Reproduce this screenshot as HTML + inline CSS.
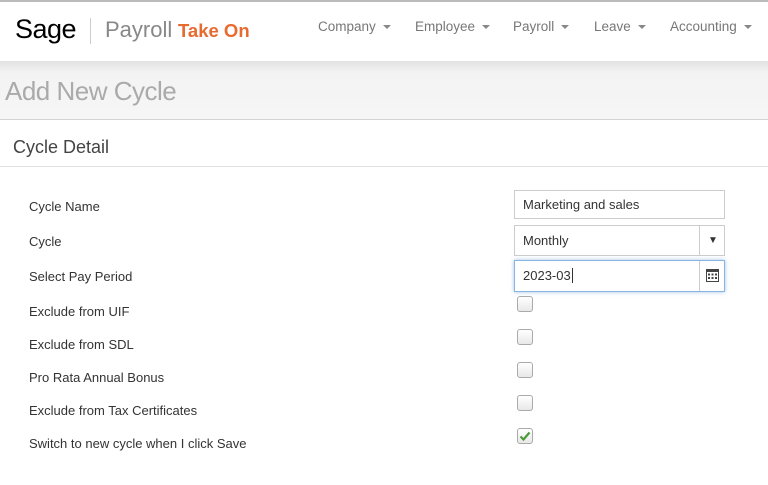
<!DOCTYPE html>
<html><head><meta charset="utf-8"><style>
*{box-sizing:border-box;margin:0;padding:0}
body{width:768px;height:485px;background:#fff;font-family:"Liberation Sans",Arial,sans-serif;position:relative;overflow:hidden}
.abs{position:absolute}
.hdr{left:0;top:0;width:768px;height:61px;background:#fff;border-top:2px solid #bbb}
.band{left:0;top:61px;width:768px;height:59px;background:linear-gradient(#e2e2e2,#f3f3f3 12px,#f6f6f6);border-bottom:1px solid #d4d4d4}
.nav{top:19px;font-size:13.5px;color:#777}
.nav i{display:inline-block;width:0;height:0;border-left:4px solid transparent;border-right:4px solid transparent;border-top:4px solid #888;margin-left:7px;vertical-align:middle}
.lbl{left:29px;font-size:13px;color:#333}
.inp{left:514px;width:211px;border:1px solid #ccc;background:#fff;font-size:13px;color:#333;padding-left:8px}
.cb{left:517px;width:16px;height:16px;border:1px solid #aaa;border-radius:3px;background:linear-gradient(#fff,#e8e8e8)}
</style></head><body>
<div class="abs hdr"></div>
<div class="abs" style="left:15px;top:14px;font-size:27px;color:#000;font-weight:500;letter-spacing:-0.5px">Sage</div>
<div class="abs" style="left:90px;top:18px;width:1px;height:26px;background:#ccc"></div>
<div class="abs" style="left:105px;top:17px;font-size:22px;color:#888">Payroll</div>
<div class="abs" style="left:178px;top:20px;font-size:18.5px;color:#e86a30;font-weight:bold">Take On</div>
<div class="abs nav" style="left:318px">Company<i></i></div>
<div class="abs nav" style="left:415px">Employee<i></i></div>
<div class="abs nav" style="left:513px">Payroll<i></i></div>
<div class="abs nav" style="left:594px">Leave<i></i></div>
<div class="abs nav" style="left:670px">Accounting<i></i></div>
<div class="abs band"></div>
<div class="abs" style="left:5px;top:76px;font-size:26px;color:#aaa;font-weight:300;letter-spacing:-0.5px">Add New Cycle</div>
<div class="abs" style="left:13px;top:137px;font-size:18px;color:#444">Cycle Detail</div>
<div class="abs" style="left:0;top:166px;width:768px;height:1px;background:#e2e2e2"></div>
<div class="abs lbl" style="top:199px">Cycle Name</div>
<div class="abs lbl" style="top:234px">Cycle</div>
<div class="abs lbl" style="top:269px">Select Pay Period</div>
<div class="abs lbl" style="top:304px">Exclude from UIF</div>
<div class="abs lbl" style="top:337px">Exclude from SDL</div>
<div class="abs lbl" style="top:370px">Pro Rata Annual Bonus</div>
<div class="abs lbl" style="top:403px">Exclude from Tax Certificates</div>
<div class="abs lbl" style="top:436px">Switch to new cycle when I click Save</div>
<div class="abs inp" style="top:190px;height:29px;line-height:27px">Marketing and sales</div>
<div class="abs inp" style="top:225px;height:31px;line-height:29px">Monthly<span class="abs" style="left:184px;top:-1px;width:1px;height:31px;background:#ccc"></span><span class="abs" style="left:193px;top:0;font-size:10px;color:#333">▼</span></div>
<div class="abs inp" style="top:260px;height:32px;line-height:29px;border-color:#8ab4e0;box-shadow:0 0 4px rgba(100,150,220,.6)">2023-03<span style="border-left:1px solid #333;margin-left:1px"></span><span class="abs" style="left:184px;top:0;width:1px;height:30px;background:#ccc"></span>
<svg class="abs" style="left:191px;top:8px" width="13" height="13" viewBox="0 0 13 13"><rect x="0.5" y="0.5" width="12" height="12" fill="none" stroke="#444"/><rect x="0.5" y="0.5" width="12" height="2.5" fill="#444"/><g fill="#444"><rect x="2" y="4.5" width="2" height="2"/><rect x="5.5" y="4.5" width="2" height="2"/><rect x="9" y="4.5" width="2" height="2"/><rect x="2" y="8" width="2" height="2"/><rect x="5.5" y="8" width="2" height="2"/><rect x="9" y="8" width="2" height="2"/></g></svg></div>
<div class="abs cb" style="top:296px"></div>
<div class="abs cb" style="top:329px"></div>
<div class="abs cb" style="top:362px"></div>
<div class="abs cb" style="top:395px"></div>
<div class="abs cb" style="top:428px"><svg width="14" height="14" viewBox="0 0 14 14"><path d="M2.5 7.5 L5.5 10.5 L11.5 3.5" fill="none" stroke="#4a9a3a" stroke-width="2.2"/></svg></div>
</body></html>
